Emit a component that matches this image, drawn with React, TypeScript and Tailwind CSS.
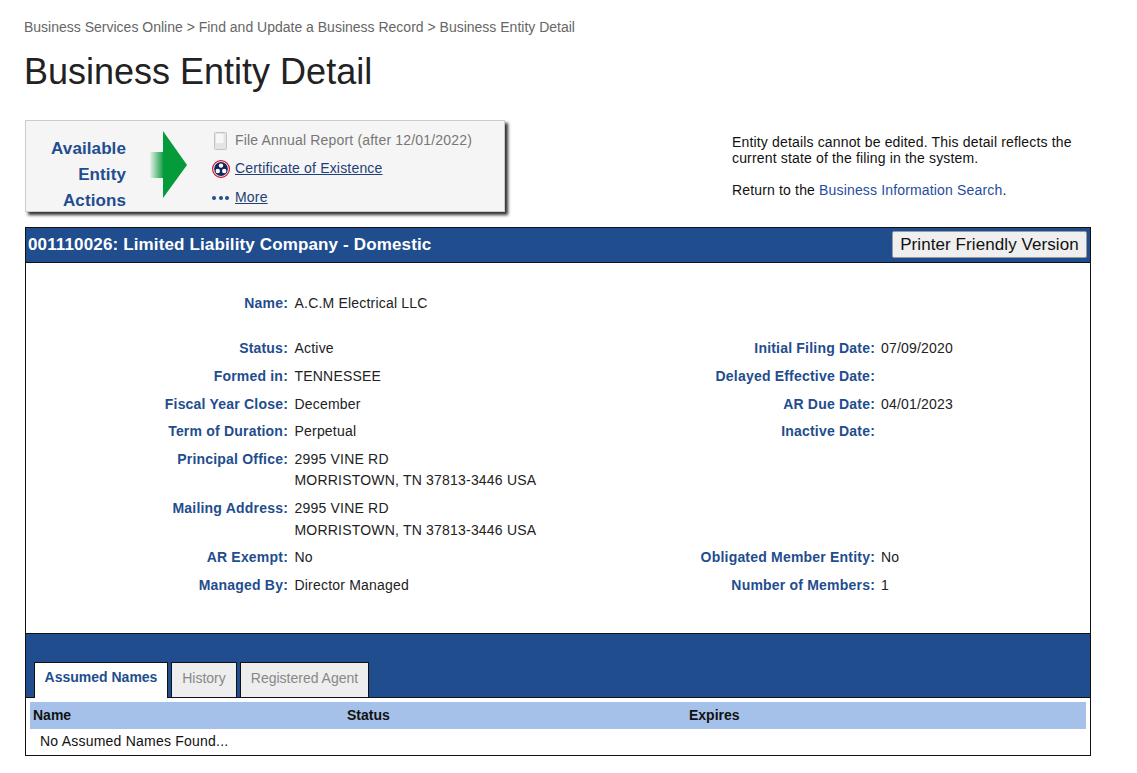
const Row = ({ label, value, rightLabel, rightValue }: { label: string; value: string[]; rightLabel?: string; rightValue?: string }) => (
  <div className="flex leading-[21.4px] mb-[6.3px] tracking-[0.2px]">
    <div className="w-[262px] shrink-0 text-right font-bold text-[#1f4d8e]">{label}:</div>
    <div className="w-[294px] shrink-0 pl-[6.5px] text-[#222]">
      {value.map((line) => (
        <div key={line}>{line}</div>
      ))}
    </div>
    {rightLabel && <div className="w-[293px] shrink-0 text-right font-bold text-[#1f4d8e]">{rightLabel}:</div>}
    {rightLabel && <div className="pl-[6px] text-[#222]">{rightValue}</div>}
  </div>
);

const Seal = () => (
  <svg width="18" height="18" viewBox="0 0 18 18" className="shrink-0">
    <circle cx="9" cy="9" r="8.4" fill="#fff" stroke="#c8102e" strokeWidth="1.2" />
    <circle cx="9" cy="9" r="6.9" fill="#14275c" />
    <circle cx="9" cy="5.6" r="2.2" fill="#fff" />
    <circle cx="5.8" cy="11" r="2.2" fill="#fff" />
    <circle cx="12.2" cy="11" r="2.2" fill="#fff" />
  </svg>
);

export default function App() {
  return (
    <div className="min-h-screen bg-white pl-[25px] pr-[46px] text-[14px] font-['Liberation_Sans',Arial,sans-serif] text-[#222]">
      <div className="pt-[18px] -ml-px leading-[18px] text-[#666]">
        Business Services Online &gt; Find and Update a Business Record &gt; Business Entity Detail
      </div>
      <h1 className="-ml-px mt-[14px] text-[36px] leading-[44px] font-normal text-[#222]">Business Entity Detail</h1>

      <div className="mt-[26px] flex h-[92px] items-start">
        <div className="flex h-[92px] w-[480px] border border-[#ccc] bg-[#f5f5f5] shadow-[3px_3px_3px_#333]">
          <div className="w-[100px] shrink-0 pt-[15px] text-right text-[17px] leading-[26px] font-bold tracking-[0.1px] text-[#1f4d8e]">
            <div>Available</div>
            <div>Entity</div>
            <div>Actions</div>
          </div>
          <svg width="38" height="68" viewBox="0 0 38 68" className="mt-[10px] ml-[24px] shrink-0">
            <defs>
              <linearGradient id="fade" x1="0" x2="1" y1="0" y2="0">
                <stop offset="0" stopColor="#059a3a" stopOpacity="0.05" />
                <stop offset="1" stopColor="#059a3a" />
              </linearGradient>
            </defs>
            <rect x="0" y="21" width="14" height="26" fill="url(#fade)" />
            <polygon points="13,0 37,34 13,67" fill="#059a3a" />
          </svg>
          <div className="ml-[24px] flex flex-col pt-[9px] tracking-[0.18px]">
            <div className="flex h-[21px] items-center gap-[5px] text-[#777]">
              <svg width="18" height="18" viewBox="0 0 18 18" className="shrink-0">
                <rect x="2.5" y="0.5" width="12" height="17" rx="1" fill="#e4e4e4" stroke="#c4c4c4" />
                <rect x="4" y="2" width="7.5" height="9" fill="#f7f7f7" />
              </svg>
              File Annual Report (after 12/01/2022)
            </div>
            <div className="mt-[7px] flex h-[21px] items-center gap-[5px]">
              <Seal />
              <a className="text-[#1f3f77] underline">Certificate of Existence</a>
            </div>
            <div className="mt-[8px] flex h-[21px] items-center gap-[5px]">
              <span className="flex w-[18px] shrink-0 gap-[2.5px]">
                <span className="size-[4px] rounded-full bg-[#1f4d8e]" />
                <span className="size-[4px] rounded-full bg-[#1f4d8e]" />
                <span className="size-[4px] rounded-full bg-[#1f4d8e]" />
              </span>
              <a className="text-[#1f3f77] underline">More</a>
            </div>
          </div>
        </div>
        <div className="ml-[227px] w-[350px] pt-[14px] leading-[16px] tracking-[0.16px] text-[#111]">
          <p>Entity details cannot be edited. This detail reflects the current state of the filing in the system.</p>
          <p className="mt-[16px]">
            Return to the <a className="text-[#1f4d9e]">Business Information Search</a>.
          </p>
        </div>
      </div>

      <div className="mt-[15px] w-[1066px] border border-[#111]">
        <div className="flex h-[34px] items-center justify-between bg-[#1f4d8e] pr-[3px] pl-[2px]">
          <div className="text-[17px] font-bold tracking-[0.14px] text-white">001110026: Limited Liability Company - Domestic</div>
          <button className="mb-[1px] h-[27px] w-[195px] rounded-[2px] border border-[#999] bg-[#efefef] text-[17px] tracking-[0.08px] text-[#111]">
            Printer Friendly Version
          </button>
        </div>
        <div className="h-[371px] border-t border-[#111] pt-[30px]">
          <div className="mb-[23.85px]">
            <Row label="Name" value={["A.C.M Electrical LLC"]} />
          </div>
          <Row label="Status" value={["Active"]} rightLabel="Initial Filing Date" rightValue="07/09/2020" />
          <Row label="Formed in" value={["TENNESSEE"]} rightLabel="Delayed Effective Date" />
          <Row label="Fiscal Year Close" value={["December"]} rightLabel="AR Due Date" rightValue="04/01/2023" />
          <Row label="Term of Duration" value={["Perpetual"]} rightLabel="Inactive Date" />
          <Row label="Principal Office" value={["2995 VINE RD", "MORRISTOWN, TN 37813-3446 USA"]} />
          <Row label="Mailing Address" value={["2995 VINE RD ", "MORRISTOWN, TN 37813-3446 USA"]} />
          <Row label="AR Exempt" value={["No"]} rightLabel="Obligated Member Entity" rightValue="No" />
          <Row label="Managed By" value={["Director Managed"]} rightLabel="Number of Members" rightValue="1" />
        </div>
        <div className="flex h-[64px] items-end gap-[3px] border-t border-[#111] bg-[#1f4d8e] pl-[8px]">
          <div className="-mb-px flex h-[36px] w-[134px] items-center justify-center border border-b-0 border-[#111] bg-white pb-[6px] font-bold text-[#1f4d8e]">
            Assumed Names
          </div>
          <div className="flex h-[35px] w-[66px] items-center justify-center border border-b-0 border-[#111] bg-[#eee] pb-[3px] text-[#888]">
            History
          </div>
          <div className="flex h-[35px] w-[129px] items-center justify-center border border-b-0 border-[#111] bg-[#eee] pb-[3px] text-[#888]">
            Registered Agent
          </div>
        </div>
        <div className="h-[58px] border-t border-[#111] px-[4px] pt-[4px]">
          <div className="flex h-[27px] items-center bg-[#a6c1e9] pl-[3px] font-bold text-[#111]">
            <div className="w-[314px]">Name</div>
            <div className="w-[342px]">Status</div>
            <div>Expires</div>
          </div>
          <div className="pt-[2px] pl-[10px] leading-[21px] tracking-[0.22px] text-[#111]">No Assumed Names Found...</div>
        </div>
      </div>
    </div>
  );
}
